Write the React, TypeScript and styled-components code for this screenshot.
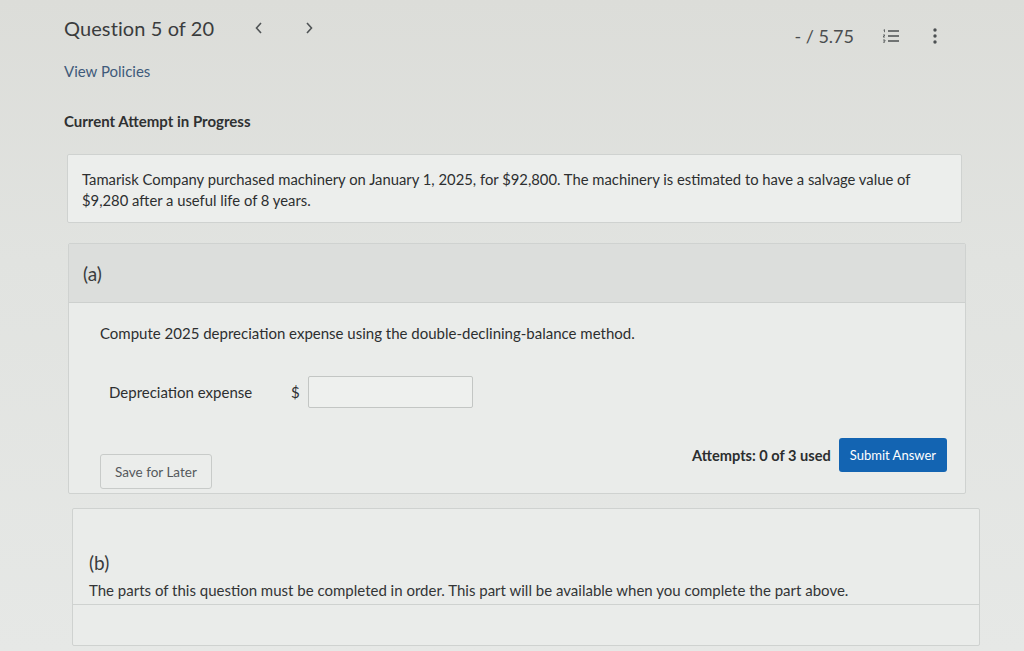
import styled, { createGlobalStyle } from 'styled-components'

const GlobalStyle = createGlobalStyle`
  html, body {
    margin: 0;
    padding: 0;
    background: #e2e4e1;
    font-family: Lato, 'Noto Sans', sans-serif;
    color: #2b2d2e;
  }
`

const Page = styled.div`
  width: 1024px;
  height: 651px;
  overflow: hidden;
  background: linear-gradient(180deg, #dcddd9 0%, #e1e3e0 40%, #e6e8e6 100%);
  box-sizing: border-box;
  padding: 0 54px 0 64px;
`

const Header = styled.header`
  display: flex;
  align-items: center;
  height: 56px;
`

const Title = styled.h1`
  margin: 0;
  font-size: 20px;
  font-weight: 400;
  color: #3a3c3d;
  letter-spacing: 0.1px;
`

const Nav = styled.div`
  display: flex;
  gap: 40px;
  margin-left: 40px;
  color: #505456;
  font-size: 16px;
`

const HeaderRight = styled.div`
  margin-left: auto;
  display: flex;
  align-items: center;
  padding-top: 16px;
  margin-right: 32px;
`

const Score = styled.span`
  font-size: 18px;
  color: #4a4d4f;
  margin-right: 28px;
`

const IconBox = styled.span<{ $gap?: number }>`
  display: inline-flex;
  color: #4c5052;
  margin-right: ${(p) => p.$gap ?? 0}px;
`

const PolicyLink = styled.a`
  display: block;
  font-size: 15px;
  color: #3f5a7a;
  margin-top: 6px;
`

const Attempt = styled.h2`
  margin: 32px 0 0;
  font-size: 15px;
  font-weight: 700;
  color: #2f3132;
`

const Card = styled.section<{ $inset?: number }>`
  background: #eaecea;
  border: 1px solid #cfd2d0;
  border-radius: 2px;
  margin-left: ${(p) => p.$inset ?? 3}px;
`

const Stem = styled(Card)`
  margin-top: 24px;
  padding: 14px 14px 11px;
  font-size: 14.8px;
  line-height: 21px;
  color: #2d2f30;
  margin-right: 8px;
  background: #eceeec;
`

const PartCard = styled(Card)`
  margin-top: 20px;
  margin-right: 4px;
`

const PartHead = styled.div`
  background: #dcdedc;
  height: 58px;
  display: flex;
  align-items: center;
  padding: 0 14px;
  border-bottom: 1px solid #cdd0ce;
  font-size: 19px;
  color: #3a3c3d;
`

const PartBody = styled.div`
  padding: 21px 18px 0 31px;
  font-size: 15px;
  color: #2d2f30;
`

const AnswerRow = styled.div`
  display: flex;
  align-items: center;
  margin-top: 34px;
  margin-left: 9px;
`

const Label = styled.span`
  width: 182px;
`

const Dollar = styled.span`
  width: 17px;
`

const Input = styled.div`
  width: 163px;
  height: 30px;
  background: #eef0ee;
  border: 1px solid #c3c6c4;
  border-radius: 2px;
`

const Actions = styled.div`
  display: flex;
  align-items: flex-start;
  margin-top: 30px;
  padding-bottom: 4px;
`

const SecondaryButton = styled.button`
  margin-top: 16px;
  font-family: inherit;
  font-size: 13.5px;
  color: #55595b;
  background: #ebedeb;
  border: 1px solid #c8cbc9;
  border-radius: 3px;
  padding: 0 14px;
  height: 35px;
`

const AttemptsText = styled.span`
  margin-left: auto;
  margin-top: 9px;
  font-size: 14.6px;
  font-weight: 700;
  color: #2c2e2f;
`

const PrimaryButton = styled.button`
  margin-left: 8px;
  font-family: inherit;
  font-size: 13px;
  font-weight: 400;
  color: #ffffff;
  background: #1364b2;
  border: 0;
  border-radius: 3px;
  height: 34px;
  padding: 0 11px;
`

const LockedCard = styled(Card)`
  margin-top: 14px;
  margin-right: -10px;
  padding: 42px 16px 0;
  font-size: 15px;
`

const LockedLabel = styled.div`
  font-size: 19px;
  color: #3a3c3d;
`

const LockedText = styled.div`
  padding: 7px 0 5px 16px;
  border-bottom: 1px solid #cfd2d0;
  margin: 0 -16px;
  color: #333536;
`

const LockedBlank = styled.div`
  height: 40px;
`

function ListIcon() {
  return (
    <svg width="18" height="16" viewBox="0 0 18 16" fill="none" stroke="currentColor">
      <path d="M6 3h11M6 8h11M6 13h11" strokeWidth="1.6" />
      <path d="M1.5 2.2l1-0.6v2.6M1 7h2l-2 2h2M1 12h2v1.2H1.8M1 14.2h2" strokeWidth="0.8" />
    </svg>
  )
}

function KebabIcon() {
  return (
    <svg width="6" height="18" viewBox="0 0 6 18" fill="currentColor">
      <circle cx="3" cy="3" r="1.7" />
      <circle cx="3" cy="9" r="1.7" />
      <circle cx="3" cy="15" r="1.7" />
    </svg>
  )
}

function Chevron({ dir }: { dir: 'left' | 'right' }) {
  return (
    <svg width="10" height="14" viewBox="0 0 10 14" fill="none" stroke="currentColor" strokeWidth="1.6">
      {dir === 'left' ? <path d="M7 2L2.5 7 7 12" /> : <path d="M3 2l4.5 5L3 12" />}
    </svg>
  )
}

export default function App() {
  return (
    <>
      <GlobalStyle />
      <Page>
        <Header>
          <Title>Question 5 of 20</Title>
          <Nav>
            <Chevron dir="left" />
            <Chevron dir="right" />
          </Nav>
          <HeaderRight>
            <Score>- / 5.75</Score>
            <IconBox $gap={32}>
              <ListIcon />
            </IconBox>
            <IconBox>
              <KebabIcon />
            </IconBox>
          </HeaderRight>
        </Header>
        <PolicyLink>View Policies</PolicyLink>
        <Attempt>Current Attempt in Progress</Attempt>
        <Stem>
          Tamarisk Company purchased machinery on January 1, 2025, for $92,800. The machinery is estimated to have a salvage value of
          <br />
          $9,280 after a useful life of 8 years.
        </Stem>
        <PartCard $inset={4}>
          <PartHead>(a)</PartHead>
          <PartBody>
            Compute 2025 depreciation expense using the double-declining-balance method.
            <AnswerRow>
              <Label>Depreciation expense</Label>
              <Dollar>$</Dollar>
              <Input />
            </AnswerRow>
            <Actions>
              <SecondaryButton>Save for Later</SecondaryButton>
              <AttemptsText>Attempts: 0 of 3 used</AttemptsText>
              <PrimaryButton>Submit Answer</PrimaryButton>
            </Actions>
          </PartBody>
        </PartCard>
        <LockedCard $inset={8}>
          <LockedLabel>(b)</LockedLabel>
          <LockedText>
            The parts of this question must be completed in order. This part will be available when you complete the part above.
          </LockedText>
          <LockedBlank />
        </LockedCard>
      </Page>
    </>
  )
}
